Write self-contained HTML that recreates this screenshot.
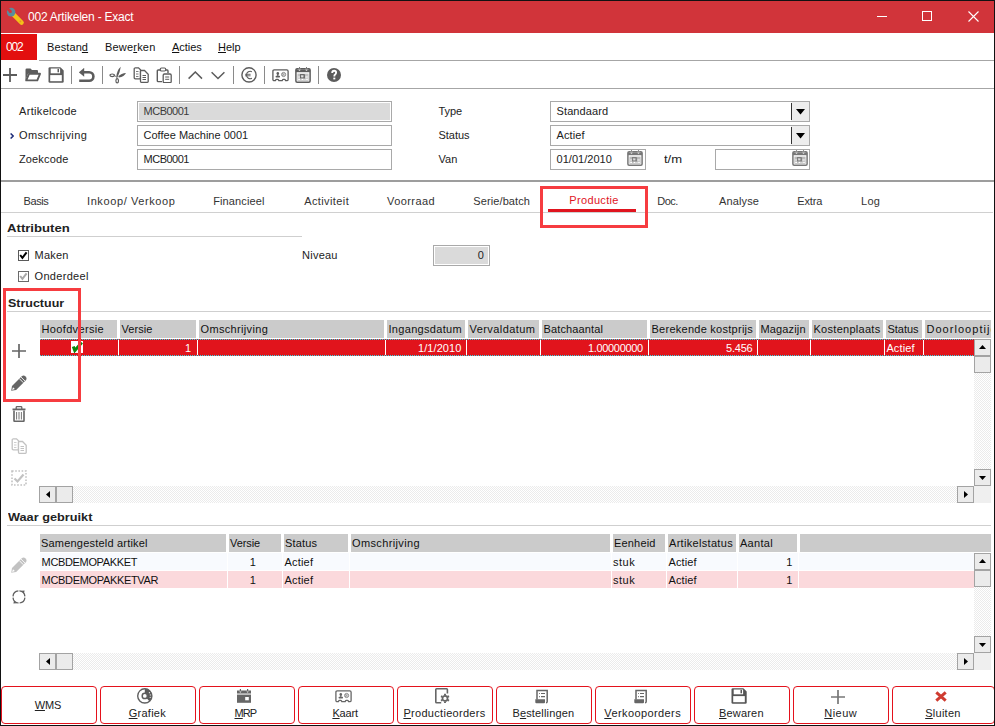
<!DOCTYPE html><html><head><meta charset="utf-8"><style>
html,body{margin:0;padding:0}
body{width:995px;height:726px;position:relative;overflow:hidden;background:#fff;font-family:"Liberation Sans",sans-serif;font-size:11px;color:#222}
.a{position:absolute}
.t{position:absolute;white-space:nowrap}
.u{text-decoration:underline}
.sb{position:absolute;box-sizing:border-box;border:1px solid #a3a3a3;background:#ebebeb}
.trk{position:absolute;background-color:#fff;background-image:repeating-conic-gradient(#ebebeb 0 25%,#fff 0 50%);background-size:2px 2px}
.btn{position:absolute;box-sizing:border-box;border:1px solid #e4121c;border-radius:4px;background:#fff}
</style></head><body>
<div class="a" style="left:1px;top:1px;width:993px;height:32px;background:#d1343a"></div>
<svg class="a" style="left:4px;top:6px" width="22" height="20" viewBox="0 0 22 20"><path d="M9.4 8.4 L17.6 16.6" stroke="#f4c118" stroke-width="4.4" stroke-linecap="round"/><circle cx="7.1" cy="6.1" r="4.3" fill="#5a8b9d"/><circle cx="6.4" cy="5.4" r="1.5" fill="#d1343a"/><path d="M7.4 4.6 L3.4 0.6 L1.6 2.4 L5.6 6.4 Z" fill="#d1343a"/><circle cx="16.4" cy="15.4" r="0.9" fill="#e8902a"/></svg>
<div class="t" style="top:9.5px;font-size:12px;line-height:15px;color:#fff;letter-spacing:-0.22px;left:28px;">002 Artikelen - Exact</div>
<div class="a" style="left:877px;top:16px;width:10px;height:1px;background:#fff"></div>
<div class="a" style="left:922px;top:11px;width:10px;height:10px;box-sizing:border-box;border:1px solid #fff"></div>
<svg class="a" style="left:968px;top:11px" width="11" height="11" viewBox="0 0 11 11"><path d="M0.5 0.5 L10.5 10.5 M10.5 0.5 L0.5 10.5" stroke="#fff" stroke-width="1.1"/></svg>
<div class="a" style="left:1px;top:34px;width:36px;height:26px;background:#e30f0f"></div>
<div class="t" style="top:39.5px;font-size:12px;line-height:15px;color:#fff;letter-spacing:-1.21px;left:6px;">002</div>
<div class="t" style="top:40.0px;font-size:11px;line-height:14px;color:#111;letter-spacing:0.10px;left:47px;">Bestan<span class="u">d</span></div>
<div class="t" style="top:40.0px;font-size:11px;line-height:14px;color:#111;letter-spacing:0.19px;left:105px;">Bewe<span class="u">r</span>ken</div>
<div class="t" style="top:40.0px;font-size:11px;line-height:14px;color:#111;letter-spacing:-0.05px;left:172px;"><span class="u">A</span>cties</div>
<div class="t" style="top:40.0px;font-size:11px;line-height:14px;color:#111;letter-spacing:0.02px;left:218px;"><span class="u">H</span>elp</div>
<div class="a" style="left:39px;top:60px;width:955px;height:1px;background:#a6a6a6"></div>
<svg class="a" style="left:3px;top:68px" width="14" height="14" viewBox="0 0 14 14"><path d="M7 0V14M0 7H14" stroke="#5c5c5c" stroke-width="1.8"/></svg>
<svg class="a" style="left:25px;top:68px" width="16" height="14" viewBox="0 0 16 14"><path d="M0.5 1.8 Q0.5 0.5 1.8 0.5 H5.5 L7 2 H12 Q13 2 13 3 V5 H4 Q3.3 5 3 5.8 L0.5 12.5 Z" fill="#5c5c5c"/><path d="M4 5.8 H15 L12.3 12.4 H1.2 Z" fill="#fff" stroke="#5c5c5c" stroke-width="1.9" stroke-linejoin="round"/></svg>
<svg class="a" style="left:48px;top:67px" width="16" height="16" viewBox="0 0 16 16"><path d="M0.5 1.6 Q0.5 0.3 1.8 0.3 H12.4 L15.7 3.6 V14.4 Q15.7 15.7 14.4 15.7 H1.8 Q0.5 15.7 0.5 14.4 Z" fill="#5c5c5c"/><rect x="2.7" y="1.5" width="9.4" height="4.8" fill="#fff"/><rect x="9.5" y="1.9" width="1.5" height="3.4" fill="#5c5c5c"/><rect x="2.2" y="8.1" width="11.6" height="6.1" fill="#fff"/></svg>
<div class="a" style="left:71px;top:66px;width:1px;height:18px;background:#8a8a8a"></div>
<svg class="a" style="left:79px;top:68px" width="16" height="14" viewBox="0 0 16 14"><path d="M3.5 4.3 H10.2 A4.2 4.2 0 0 1 10.2 12.7 H0.2" fill="none" stroke="#5c5c5c" stroke-width="2.6"/><path d="M-0.2 4.3 L5.2 -0.2 V8.8 Z" fill="#5c5c5c"/></svg>
<div class="a" style="left:102px;top:66px;width:1px;height:18px;background:#8a8a8a"></div>
<svg class="a" style="left:106px;top:64px" width="24" height="22" viewBox="0 0 24 22"><ellipse cx="6.2" cy="11.3" rx="2.2" ry="1.3" fill="none" stroke="#5c5c5c" stroke-width="1.2"/><ellipse cx="11.2" cy="16.7" rx="1.3" ry="2.1" fill="none" stroke="#5c5c5c" stroke-width="1.2"/><path d="M10.3 13.2 Q10.6 6.5 14.8 2.8 Q14.0 8.2 11.6 13.0 Z" fill="#5c5c5c"/><path d="M12.3 12.2 Q15.4 9.0 20.0 8.9 Q18.4 12.4 12.8 13.5 Z" fill="#5c5c5c"/><path d="M8.2 11.6 L10.4 12.6 M10.8 14.6 L11.0 13.0" stroke="#5c5c5c" stroke-width="0.9"/></svg>
<svg class="a" style="left:133px;top:67px" width="16" height="16" viewBox="0 0 16 16"><path d="M1.2 2 Q1.2 0.8 2.4 0.8 H5.5 L7.5 2.8 V11.8 H2.4 Q1.2 11.8 1.2 10.6 Z" fill="#fff" stroke="#5c5c5c" stroke-width="1.3"/><path d="M3 4.5 H5.5 M3 7 H5.5 M3 9.5 H5.5" stroke="#5c5c5c" stroke-width="0.8"/><path d="M7.5 4.2 Q7.5 3.5 8.2 3.5 H11.5 L15.2 7.2 V14.5 Q15.2 15.3 14.4 15.3 H8.3 Q7.5 15.3 7.5 14.5 Z" fill="#fff" stroke="#5c5c5c" stroke-width="1.3"/><path d="M9.5 8.5 H13 M9.5 10.5 H13 M9.5 12.5 H13" stroke="#5c5c5c" stroke-width="1"/></svg>
<svg class="a" style="left:156px;top:67px" width="16" height="16" viewBox="0 0 16 16"><path d="M4 3 H2.2 Q1.3 3 1.3 4 V13.8 Q1.3 14.6 2.2 14.6 H6 M10 3 H11.2 Q12 3 12 4 V6" fill="none" stroke="#5c5c5c" stroke-width="1.4"/><rect x="4.3" y="1" width="5.4" height="3" rx="1.2" fill="#fff" stroke="#5c5c5c" stroke-width="1.2"/><rect x="7.2" y="7" width="8" height="8.6" rx="1.2" fill="#fff" stroke="#5c5c5c" stroke-width="1.3"/><path d="M9.2 10 H13.2 M9.2 12.3 H13.2" stroke="#5c5c5c" stroke-width="1"/></svg>
<div class="a" style="left:179px;top:66px;width:1px;height:18px;background:#8a8a8a"></div>
<svg class="a" style="left:188px;top:71px" width="15" height="9" viewBox="0 0 15 9"><path d="M0.6 7.6 L7.3 1 L14 7.6" fill="none" stroke="#5c5c5c" stroke-width="1.5"/></svg>
<svg class="a" style="left:211px;top:71px" width="14" height="9" viewBox="0 0 14 9"><path d="M0.6 1.2 L7 7.5 L13.4 1.2" fill="none" stroke="#5c5c5c" stroke-width="1.5"/></svg>
<div class="a" style="left:233px;top:66px;width:1px;height:18px;background:#8a8a8a"></div>
<svg class="a" style="left:241px;top:67px" width="16" height="16" viewBox="0 0 16 16"><circle cx="8" cy="7.9" r="7.1" fill="none" stroke="#5c5c5c" stroke-width="1.4"/><path d="M10.9 4.7 A3.7 3.7 0 1 0 10.9 11.3" fill="none" stroke="#5c5c5c" stroke-width="1.15"/><path d="M4.0 7.3 H9.6 M4.0 8.8 H9.6" stroke="#5c5c5c" stroke-width="0.9"/></svg>
<div class="a" style="left:264px;top:66px;width:1px;height:18px;background:#8a8a8a"></div>
<svg class="a" style="left:271.5px;top:68.8px" width="17" height="13" viewBox="0 0 17 13"><path d="M2.2 0.9 H14.8 Q16.1 0.9 16.1 2.2 V10.4 Q16.1 11.7 14.8 11.7 H14.2 Q13.5 11.7 13.3 11.0 Q13.1 10.3 12.4 10.3 H11.4 Q10.7 10.3 10.5 11.0 Q10.3 11.7 9.6 11.7 H7.4 Q6.7 11.7 6.5 11.0 Q6.3 10.3 5.6 10.3 H4.6 Q3.9 10.3 3.7 11.0 Q3.5 11.7 2.8 11.7 H2.2 Q0.9 11.7 0.9 10.4 V2.2 Q0.9 0.9 2.2 0.9 Z" fill="none" stroke="#5c5c5c" stroke-width="1.3"/><circle cx="5.8" cy="4.4" r="1.3" fill="#5c5c5c"/><path d="M5.8 5 V7" stroke="#5c5c5c" stroke-width="1.2"/><rect x="3.6" y="6.8" width="4.4" height="1.6" rx="0.6" fill="#5c5c5c"/><circle cx="11.6" cy="5.5" r="2.1" fill="#d0d0d0" stroke="#888" stroke-width="0.9"/><path d="M10.6 4.2 Q12 5.5 10.6 6.8" fill="none" stroke="#777" stroke-width="0.7"/></svg>
<svg class="a" style="left:295px;top:67px" width="16" height="16" viewBox="0 0 16 16"><rect x="0.9" y="1.8" width="14.2" height="13.4" rx="1.2" fill="#fff" stroke="#5c5c5c" stroke-width="1.5"/><path d="M0.9 2.4 H15.1 V5.2 H0.9 Z" fill="#5c5c5c"/><path d="M4.5 0.2 V3.8 M11.5 0.2 V3.8" stroke="#e8e8e8" stroke-width="1.4"/><path d="M4.5 0 V2.6 M11.5 0 V2.6" stroke="#5c5c5c" stroke-width="0.8"/><rect x="2.4" y="6.6" width="11.2" height="7.2" fill="#c4c4c4"/><path d="M3.2 10 H5 M6.4 10 H8.6 M10.2 10 H12.8 M3.2 12.4 H5 M6.6 12.4 H8.4 M9.6 12.4 H10.4 M11.2 12.4 H12.8" stroke="#fff" stroke-width="1.1"/><rect x="5.4" y="7.6" width="3.6" height="3.3" fill="none" stroke="#5c5c5c" stroke-width="0.9"/><path d="M9.6 7.4 V11.4" stroke="#5c5c5c" stroke-width="0.8"/></svg>
<div class="a" style="left:318px;top:66px;width:1px;height:18px;background:#8a8a8a"></div>
<svg class="a" style="left:327px;top:68px" width="15" height="15" viewBox="0 0 15 15"><circle cx="7.0" cy="7.0" r="7.0" fill="#5c5c5c"/><path d="M5.2 5.1 Q5.2 2.8 7.2 2.8 Q9.1 2.8 9.1 4.6 Q9.1 5.8 8.1 6.5 Q7.3 7.0 7.3 8.6" fill="none" stroke="#fff" stroke-width="1.9"/><rect x="6.3" y="9.6" width="2.0" height="1.8" fill="#fff"/></svg>
<div class="a" style="left:1px;top:88px;width:993px;height:1px;background:#a6a6a6"></div>
<div class="t" style="top:104.0px;font-size:11px;line-height:14px;color:#222;letter-spacing:0.33px;left:19px;">Artikelcode</div>
<svg class="a" style="left:10px;top:133px" width="4" height="6" viewBox="0 0 4 6"><path d="M0.6 0.5 L3.2 3 L0.6 5.5" fill="none" stroke="#1c2a78" stroke-width="1.5"/></svg>
<div class="t" style="top:128.0px;font-size:11px;line-height:14px;color:#222;letter-spacing:0.38px;left:19px;">Omschrijving</div>
<div class="t" style="top:152.0px;font-size:11px;line-height:14px;color:#222;letter-spacing:0.14px;left:19px;">Zoekcode</div>
<div class="a" style="left:137px;top:101px;width:255px;height:21px;box-sizing:border-box;border:1px solid #a9a9a9;background:#fff"></div>
<div class="a" style="left:139px;top:103px;width:251px;height:17px;background:#dadada"></div>
<div class="a" style="left:137px;top:125px;width:255px;height:21px;box-sizing:border-box;border:1px solid #a9a9a9;background:#fff"></div>
<div class="a" style="left:137px;top:149px;width:255px;height:21px;box-sizing:border-box;border:1px solid #a9a9a9;background:#fff"></div>
<div class="t" style="top:104.0px;font-size:11px;line-height:14px;color:#3a3a3a;letter-spacing:-0.49px;left:143.5px;">MCB0001</div>
<div class="t" style="top:128.0px;font-size:11px;line-height:14px;color:#222;letter-spacing:0.02px;left:143.5px;">Coffee Machine 0001</div>
<div class="t" style="top:152.0px;font-size:11px;line-height:14px;color:#222;letter-spacing:-0.49px;left:143.5px;">MCB0001</div>
<div class="t" style="top:104.0px;font-size:11px;line-height:14px;color:#222;letter-spacing:-0.09px;left:438.5px;">Type</div>
<div class="t" style="top:128.0px;font-size:11px;line-height:14px;color:#222;letter-spacing:-0.02px;left:438.5px;">Status</div>
<div class="t" style="top:152.0px;font-size:11px;line-height:14px;color:#222;left:438.5px;">Van</div>
<div class="a" style="left:550px;top:101px;width:260px;height:21px;box-sizing:border-box;border:1px solid #a9a9a9;background:#fff"></div>
<div class="a" style="left:791px;top:102px;width:18px;height:19px;background:#ededed"></div>
<div class="a" style="left:791px;top:103px;width:1px;height:17px;background:#333"></div>
<svg class="a" style="left:796px;top:109px" width="9" height="6" viewBox="0 0 9 6"><path d="M0 0 H9 L4.5 5.5 Z" fill="#000"/></svg>
<div class="a" style="left:550px;top:125px;width:260px;height:21px;box-sizing:border-box;border:1px solid #a9a9a9;background:#fff"></div>
<div class="a" style="left:791px;top:126px;width:18px;height:19px;background:#ededed"></div>
<div class="a" style="left:791px;top:127px;width:1px;height:17px;background:#333"></div>
<svg class="a" style="left:796px;top:133px" width="9" height="6" viewBox="0 0 9 6"><path d="M0 0 H9 L4.5 5.5 Z" fill="#000"/></svg>
<div class="t" style="top:104.0px;font-size:11px;line-height:14px;color:#222;letter-spacing:0.12px;left:556.5px;">Standaard</div>
<div class="t" style="top:128.0px;font-size:11px;line-height:14px;color:#222;letter-spacing:0.09px;left:556.5px;">Actief</div>
<div class="a" style="left:550px;top:149px;width:96px;height:21px;box-sizing:border-box;border:1px solid #a9a9a9;background:#fff"></div>
<svg class="a" style="left:627px;top:150px" width="16" height="16" viewBox="0 0 16 16"><rect x="0.9" y="1.8" width="14.2" height="13.4" rx="1.2" fill="#fff" stroke="#777" stroke-width="1.5"/><path d="M0.9 2.4 H15.1 V5.2 H0.9 Z" fill="#777"/><path d="M4.5 0.2 V3.8 M11.5 0.2 V3.8" stroke="#e8e8e8" stroke-width="1.4"/><path d="M4.5 0 V2.6 M11.5 0 V2.6" stroke="#777" stroke-width="0.8"/><rect x="2.4" y="6.6" width="11.2" height="7.2" fill="#bbb"/><path d="M3.2 10 H5 M6.4 10 H8.6 M10.2 10 H12.8 M3.2 12.4 H5 M6.6 12.4 H8.4 M9.6 12.4 H10.4 M11.2 12.4 H12.8" stroke="#fff" stroke-width="1.1"/><rect x="5.4" y="7.6" width="3.6" height="3.3" fill="none" stroke="#777" stroke-width="0.9"/><path d="M9.6 7.4 V11.4" stroke="#777" stroke-width="0.8"/></svg>
<div class="t" style="top:152.0px;font-size:11px;line-height:14px;color:#222;letter-spacing:0.03px;left:556.5px;">01/01/2010</div>
<div class="t" style="top:152.0px;font-size:11px;line-height:14px;color:#222;left:663.5px;transform:scaleX(1.1845);transform-origin:0 0;">t/m</div>
<div class="a" style="left:715px;top:149px;width:95px;height:21px;box-sizing:border-box;border:1px solid #a9a9a9;background:#fff"></div>
<svg class="a" style="left:792px;top:150px" width="16" height="16" viewBox="0 0 16 16"><rect x="0.9" y="1.8" width="14.2" height="13.4" rx="1.2" fill="#fff" stroke="#777" stroke-width="1.5"/><path d="M0.9 2.4 H15.1 V5.2 H0.9 Z" fill="#777"/><path d="M4.5 0.2 V3.8 M11.5 0.2 V3.8" stroke="#e8e8e8" stroke-width="1.4"/><path d="M4.5 0 V2.6 M11.5 0 V2.6" stroke="#777" stroke-width="0.8"/><rect x="2.4" y="6.6" width="11.2" height="7.2" fill="#bbb"/><path d="M3.2 10 H5 M6.4 10 H8.6 M10.2 10 H12.8 M3.2 12.4 H5 M6.6 12.4 H8.4 M9.6 12.4 H10.4 M11.2 12.4 H12.8" stroke="#fff" stroke-width="1.1"/><rect x="5.4" y="7.6" width="3.6" height="3.3" fill="none" stroke="#777" stroke-width="0.9"/><path d="M9.6 7.4 V11.4" stroke="#777" stroke-width="0.8"/></svg>
<div class="a" style="left:1px;top:180px;width:993px;height:2px;background:#9d9d9d"></div>
<div class="t" style="top:194.0px;font-size:11px;line-height:14px;color:#333;letter-spacing:-0.40px;left:23.5px;">Basis</div>
<div class="t" style="top:194.0px;font-size:11px;line-height:14px;color:#333;letter-spacing:0.60px;left:87px;">Inkoop/ Verkoop</div>
<div class="t" style="top:194.0px;font-size:11px;line-height:14px;color:#333;letter-spacing:0.12px;left:213.2px;">Financieel</div>
<div class="t" style="top:194.0px;font-size:11px;line-height:14px;color:#333;letter-spacing:0.40px;left:304.2px;">Activiteit</div>
<div class="t" style="top:194.0px;font-size:11px;line-height:14px;color:#333;letter-spacing:0.43px;left:387px;">Voorraad</div>
<div class="t" style="top:194.0px;font-size:11px;line-height:14px;color:#333;letter-spacing:0.10px;left:473.3px;">Serie/batch</div>
<div class="t" style="top:194.0px;font-size:11px;line-height:14px;color:#333;letter-spacing:-0.54px;left:657.3px;">Doc.</div>
<div class="t" style="top:194.0px;font-size:11px;line-height:14px;color:#333;letter-spacing:0.12px;left:719.1px;">Analyse</div>
<div class="t" style="top:194.0px;font-size:11px;line-height:14px;color:#333;letter-spacing:-0.15px;left:797.3px;">Extra</div>
<div class="t" style="top:194.0px;font-size:11px;line-height:14px;color:#333;letter-spacing:0.31px;left:861px;">Log</div>
<div class="t" style="top:193.0px;font-size:11px;line-height:14px;color:#e0141e;letter-spacing:0.34px;left:569.3px;">Productie</div>
<div class="a" style="left:548px;top:209px;width:88px;height:4px;background:#e0141e"></div>
<div class="a" style="left:1px;top:212px;width:992px;height:1px;background:#d0d0d0"></div>
<div class="a" style="left:540px;top:186px;width:108px;height:42px;box-sizing:border-box;border:3px solid #f63c40"></div>
<div class="t" style="top:221.0px;font-size:11px;line-height:14px;color:#222;font-weight:bold;left:7.2px;transform:scaleX(1.1955);transform-origin:0 0;">Attributen</div>
<div class="a" style="left:7px;top:236px;width:295px;height:1px;background:#cfcfcf"></div>
<div class="a" style="left:18px;top:250px;width:11px;height:11px;box-sizing:border-box;border:1px solid #5a5a5a;background:#fff"></div>
<svg class="a" style="left:18px;top:250px" width="11" height="11" viewBox="0 0 11 11"><path d="M2.2 5.0 L4.4 7.8 L8.6 2.4" fill="none" stroke="#000" stroke-width="2.0"/></svg>
<div class="a" style="left:18px;top:271px;width:11px;height:11px;box-sizing:border-box;border:1px solid #6a6a6a;background:#fff"></div>
<svg class="a" style="left:18px;top:271px" width="11" height="11" viewBox="0 0 11 11"><path d="M2.2 5.0 L4.4 7.8 L8.6 2.4" fill="none" stroke="#a8a8a8" stroke-width="2.0"/></svg>
<div class="t" style="top:248.0px;font-size:11px;line-height:14px;color:#222;letter-spacing:0.17px;left:34.6px;">Maken</div>
<div class="t" style="top:269.0px;font-size:11px;line-height:14px;color:#222;letter-spacing:0.30px;left:34.6px;">Onderdeel</div>
<div class="t" style="top:248.0px;font-size:11px;line-height:14px;color:#222;letter-spacing:0.25px;left:302px;">Niveau</div>
<div class="a" style="left:433px;top:245px;width:57px;height:21px;box-sizing:border-box;border:1px solid #a9a9a9;background:#fff"></div>
<div class="a" style="left:435px;top:247px;width:53px;height:17px;background:#dadada"></div>
<div class="t" style="top:248.0px;font-size:11px;line-height:14px;color:#222;right:511.20px;">0</div>
<div class="t" style="top:296.0px;font-size:11px;line-height:14px;color:#222;font-weight:bold;left:7.5px;transform:scaleX(1.1333);transform-origin:0 0;">Structuur</div>
<div class="a" style="left:7px;top:311px;width:984px;height:1px;background:#cfcfcf"></div>
<div class="a" style="left:0;top:0;width:991px;height:726px;overflow:hidden">
<div class="a" style="left:40px;top:320px;width:77px;height:18px;background:#cbcbcb"></div>
<div class="t" style="top:321.5px;font-size:11px;line-height:14px;color:#111;letter-spacing:0.35px;left:41.5px;">Hoofdversie</div>
<div class="a" style="left:120px;top:320px;width:76px;height:18px;background:#cbcbcb"></div>
<div class="t" style="top:321.5px;font-size:11px;line-height:14px;color:#111;letter-spacing:0.06px;left:121.5px;">Versie</div>
<div class="a" style="left:199px;top:320px;width:185px;height:18px;background:#cbcbcb"></div>
<div class="t" style="top:321.5px;font-size:11px;line-height:14px;color:#111;letter-spacing:0.34px;left:200.5px;">Omschrijving</div>
<div class="a" style="left:387px;top:320px;width:78px;height:18px;background:#cbcbcb"></div>
<div class="t" style="top:321.5px;font-size:11px;line-height:14px;color:#111;letter-spacing:0.31px;left:388.5px;">Ingangsdatum</div>
<div class="a" style="left:468px;top:320px;width:71px;height:18px;background:#cbcbcb"></div>
<div class="t" style="top:321.5px;font-size:11px;line-height:14px;color:#111;letter-spacing:0.43px;left:469.5px;">Vervaldatum</div>
<div class="a" style="left:542px;top:320px;width:105px;height:18px;background:#cbcbcb"></div>
<div class="t" style="top:321.5px;font-size:11px;line-height:14px;color:#111;letter-spacing:0.14px;left:543.5px;">Batchaantal</div>
<div class="a" style="left:650px;top:320px;width:106px;height:18px;background:#cbcbcb"></div>
<div class="t" style="top:321.5px;font-size:11px;line-height:14px;color:#111;letter-spacing:0.26px;left:651.5px;">Berekende kostprijs</div>
<div class="a" style="left:759px;top:320px;width:50px;height:18px;background:#cbcbcb"></div>
<div class="t" style="top:321.5px;font-size:11px;line-height:14px;color:#111;letter-spacing:0.14px;left:760.5px;">Magazijn</div>
<div class="a" style="left:812px;top:320px;width:71px;height:18px;background:#cbcbcb"></div>
<div class="t" style="top:321.5px;font-size:11px;line-height:14px;color:#111;letter-spacing:0.28px;left:813.5px;">Kostenplaats</div>
<div class="a" style="left:886px;top:320px;width:36px;height:18px;background:#cbcbcb"></div>
<div class="t" style="top:321.5px;font-size:11px;line-height:14px;color:#111;letter-spacing:-0.04px;left:887.5px;">Status</div>
<div class="a" style="left:925px;top:320px;width:66px;height:18px;background:#cbcbcb"></div>
<div class="t" style="top:321.5px;font-size:11px;line-height:14px;color:#111;letter-spacing:1.03px;left:926.5px;">Doorlooptijd</div>
</div>
<div class="a" style="left:40px;top:339px;width:934px;height:17px;background:#e1141c"></div>
<div class="a" style="left:40px;top:339px;width:934px;height:1px;background-image:repeating-linear-gradient(90deg,#30d8e8 0 1px,#e1141c 1px 2px)"></div>
<div class="a" style="left:40px;top:355px;width:934px;height:1px;background-image:repeating-linear-gradient(90deg,#30d8e8 0 1px,#e1141c 1px 2px)"></div>
<div class="a" style="left:118px;top:340px;width:1px;height:15px;background:#fff"></div>
<div class="a" style="left:197px;top:340px;width:1px;height:15px;background:#fff"></div>
<div class="a" style="left:385px;top:340px;width:1px;height:15px;background:#fff"></div>
<div class="a" style="left:466px;top:340px;width:1px;height:15px;background:#fff"></div>
<div class="a" style="left:540px;top:340px;width:1px;height:15px;background:#fff"></div>
<div class="a" style="left:648px;top:340px;width:1px;height:15px;background:#fff"></div>
<div class="a" style="left:757px;top:340px;width:1px;height:15px;background:#fff"></div>
<div class="a" style="left:810px;top:340px;width:1px;height:15px;background:#fff"></div>
<div class="a" style="left:884px;top:340px;width:1px;height:15px;background:#fff"></div>
<div class="a" style="left:923px;top:340px;width:1px;height:15px;background:#fff"></div>
<div class="a" style="left:71px;top:341px;width:12px;height:12px;background:#fff"></div>
<svg class="a" style="left:71px;top:341px" width="12" height="12" viewBox="0 0 12 12"><path d="M2.3 5.4 L3.8 9.6 L10.8 1.6" fill="none" stroke="#0b870b" stroke-width="3.0" stroke-linejoin="miter"/></svg>
<div class="t" style="top:341.0px;font-size:11px;line-height:14px;color:#fff;right:803.80px;">1</div>
<div class="t" style="top:341.0px;font-size:11px;line-height:14px;color:#fff;letter-spacing:0.06px;right:533.64px;">1/1/2010</div>
<div class="t" style="top:341.0px;font-size:11px;line-height:14px;color:#fff;letter-spacing:-0.34px;right:352.24px;">1.00000000</div>
<div class="t" style="top:341.0px;font-size:11px;line-height:14px;color:#fff;letter-spacing:-0.22px;right:242.52px;">5.456</div>
<div class="t" style="top:341.0px;font-size:11px;line-height:14px;color:#fff;letter-spacing:0.13px;left:886.4px;">Actief</div>
<div class="trk" style="left:974px;top:339px;width:17px;height:147px"></div>
<div class="sb" style="left:974px;top:339px;width:17px;height:17px"></div>
<svg class="a" style="left:979px;top:345px" width="7" height="4" viewBox="0 0 7 4"><path d="M0 4 L3.5 0 L7 4 Z" fill="#000"/></svg>
<div class="sb" style="left:974px;top:356px;width:17px;height:17px"></div>
<div class="sb" style="left:974px;top:469px;width:17px;height:17px"></div>
<svg class="a" style="left:979px;top:476px" width="7" height="4" viewBox="0 0 7 4"><path d="M0 0 L7 0 L3.5 4 Z" fill="#000"/></svg>
<div class="trk" style="left:39px;top:486px;width:935px;height:17px"></div>
<div class="sb" style="left:39px;top:486px;width:17px;height:17px"></div>
<svg class="a" style="left:46px;top:491px" width="4" height="7" viewBox="0 0 4 7"><path d="M4 0 V7 L0 3.5 Z" fill="#000"/></svg>
<div class="sb" style="left:56px;top:486px;width:17px;height:17px"></div>
<div class="sb" style="left:957px;top:486px;width:17px;height:17px"></div>
<svg class="a" style="left:964px;top:491px" width="4" height="7" viewBox="0 0 4 7"><path d="M0 0 V7 L4 3.5 Z" fill="#000"/></svg>
<div class="a" style="left:974px;top:486px;width:17px;height:17px;background:#efefef"></div>
<svg class="a" style="left:12px;top:344px" width="14" height="14" viewBox="0 0 14 14"><path d="M7 0V14M0 7H14" stroke="#666" stroke-width="1.7"/></svg>
<svg class="a" style="left:11px;top:375px" width="16" height="16" viewBox="0 0 16 16"><path d="M0.2 15.8 L1.0 10.9 L11.0 0.9 Q12.9 -0.2 14.6 1.5 Q16.2 3.2 15.1 5.0 L5.1 15.0 Z" fill="#666"/><path d="M9.9 2.0 L14.0 6.1 M8.3 3.6 L12.4 7.7" stroke="#fff" stroke-width="0.9"/><path d="M2.0 12.2 L3.8 14.0 L1.1 14.9 Z" fill="#fff"/></svg>
<svg class="a" style="left:12px;top:406px" width="14" height="16" viewBox="0 0 14 16"><path d="M0.5 3.4 H13.5" stroke="#666" stroke-width="1.8"/><path d="M4.2 3 V1.5 Q4.2 0.6 5.1 0.6 H8.9 Q9.8 0.6 9.8 1.5 V3" fill="none" stroke="#666" stroke-width="1.3"/><path d="M2 4.5 V14.5 Q2 15.4 2.9 15.4 H11.1 Q12 15.4 12 14.5 V4.5" fill="none" stroke="#666" stroke-width="1.6"/><path d="M4.6 6 V13.5 M7 6 V13.5 M9.4 6 V13.5" stroke="#666" stroke-width="0.9"/></svg>
<svg class="a" style="left:11px;top:438px" width="16" height="16" viewBox="0 0 16 16"><path d="M1.2 2 Q1.2 0.8 2.4 0.8 H5.5 L7.5 2.8 V11.8 H2.4 Q1.2 11.8 1.2 10.6 Z" fill="#fff" stroke="#c2c2c2" stroke-width="1.3"/><path d="M3 4.5 H5.5 M3 7 H5.5 M3 9.5 H5.5" stroke="#c2c2c2" stroke-width="0.8"/><path d="M7.5 4.2 Q7.5 3.5 8.2 3.5 H11.5 L15.2 7.2 V14.5 Q15.2 15.3 14.4 15.3 H8.3 Q7.5 15.3 7.5 14.5 Z" fill="#fff" stroke="#c2c2c2" stroke-width="1.3"/><path d="M9.5 8.5 H13 M9.5 10.5 H13 M9.5 12.5 H13" stroke="#c2c2c2" stroke-width="1"/></svg>
<svg class="a" style="left:11px;top:470px" width="16" height="16" viewBox="0 0 16 16"><rect x="1" y="1" width="14" height="14" fill="none" stroke="#c2c2c2" stroke-width="1.6" stroke-dasharray="1.6 1.6"/><path d="M3.5 8.5 L6.5 11.5 L12.5 4.5" fill="none" stroke="#c2c2c2" stroke-width="2.2"/></svg>
<div class="a" style="left:3px;top:288px;width:78px;height:114px;box-sizing:border-box;border:3px solid #f63c40"></div>
<div class="t" style="top:510.0px;font-size:11px;line-height:14px;color:#222;font-weight:bold;left:7.6px;transform:scaleX(1.1567);transform-origin:0 0;">Waar gebruikt</div>
<div class="a" style="left:7px;top:525px;width:984px;height:1px;background:#cfcfcf"></div>
<div class="a" style="left:40px;top:534px;width:186px;height:18px;background:#cbcbcb"></div>
<div class="t" style="top:536.0px;font-size:11px;line-height:14px;color:#111;letter-spacing:0.20px;left:41px;">Samengesteld artikel</div>
<div class="a" style="left:229px;top:534px;width:52px;height:18px;background:#cbcbcb"></div>
<div class="t" style="top:536.0px;font-size:11px;line-height:14px;color:#111;letter-spacing:-0.08px;left:230px;">Versie</div>
<div class="a" style="left:284px;top:534px;width:64px;height:18px;background:#cbcbcb"></div>
<div class="t" style="top:536.0px;font-size:11px;line-height:14px;color:#111;letter-spacing:0.18px;left:285px;">Status</div>
<div class="a" style="left:351px;top:534px;width:259px;height:18px;background:#cbcbcb"></div>
<div class="t" style="top:536.0px;font-size:11px;line-height:14px;color:#111;letter-spacing:0.37px;left:352px;">Omschrijving</div>
<div class="a" style="left:613px;top:534px;width:52px;height:18px;background:#cbcbcb"></div>
<div class="t" style="top:536.0px;font-size:11px;line-height:14px;color:#111;letter-spacing:0.18px;left:614px;">Eenheid</div>
<div class="a" style="left:668px;top:534px;width:68px;height:18px;background:#cbcbcb"></div>
<div class="t" style="top:536.0px;font-size:11px;line-height:14px;color:#111;letter-spacing:0.31px;left:669px;">Artikelstatus</div>
<div class="a" style="left:739px;top:534px;width:58px;height:18px;background:#cbcbcb"></div>
<div class="t" style="top:536.0px;font-size:11px;line-height:14px;color:#111;letter-spacing:0.28px;left:740px;">Aantal</div>
<div class="a" style="left:800px;top:534px;width:191px;height:18px;background:#cbcbcb"></div>
<div class="a" style="left:40px;top:553px;width:934px;height:17px;background:#f8fafe"></div>
<div class="a" style="left:40px;top:571px;width:934px;height:17px;background:#fbd9dc"></div>
<div class="a" style="left:227px;top:553px;width:1px;height:35px;background:#fff"></div>
<div class="a" style="left:282px;top:553px;width:1px;height:35px;background:#fff"></div>
<div class="a" style="left:349px;top:553px;width:1px;height:35px;background:#fff"></div>
<div class="a" style="left:611px;top:553px;width:1px;height:35px;background:#fff"></div>
<div class="a" style="left:666px;top:553px;width:1px;height:35px;background:#fff"></div>
<div class="a" style="left:737px;top:553px;width:1px;height:35px;background:#fff"></div>
<div class="a" style="left:798px;top:553px;width:1px;height:35px;background:#fff"></div>
<div class="t" style="top:555.0px;font-size:11px;line-height:14px;color:#111;letter-spacing:-0.35px;left:41.6px;">MCBDEMOPAKKET</div>
<div class="t" style="top:555.0px;font-size:11px;line-height:14px;color:#111;right:739.20px;">1</div>
<div class="t" style="top:555.0px;font-size:11px;line-height:14px;color:#111;letter-spacing:0.19px;left:284.5px;">Actief</div>
<div class="t" style="top:555.0px;font-size:11px;line-height:14px;color:#111;letter-spacing:0.50px;left:613px;">stuk</div>
<div class="t" style="top:555.0px;font-size:11px;line-height:14px;color:#111;letter-spacing:0.13px;left:668.5px;">Actief</div>
<div class="t" style="top:555.0px;font-size:11px;line-height:14px;color:#111;right:202.70px;">1</div>
<div class="t" style="top:573.0px;font-size:11px;line-height:14px;color:#111;letter-spacing:-0.33px;left:41.6px;">MCBDEMOPAKKETVAR</div>
<div class="t" style="top:573.0px;font-size:11px;line-height:14px;color:#111;right:739.20px;">1</div>
<div class="t" style="top:573.0px;font-size:11px;line-height:14px;color:#111;letter-spacing:0.19px;left:284.5px;">Actief</div>
<div class="t" style="top:573.0px;font-size:11px;line-height:14px;color:#111;letter-spacing:0.50px;left:613px;">stuk</div>
<div class="t" style="top:573.0px;font-size:11px;line-height:14px;color:#111;letter-spacing:0.13px;left:668.5px;">Actief</div>
<div class="t" style="top:573.0px;font-size:11px;line-height:14px;color:#111;right:202.70px;">1</div>
<div class="trk" style="left:974px;top:553px;width:17px;height:100px"></div>
<div class="sb" style="left:974px;top:553px;width:17px;height:17px"></div>
<svg class="a" style="left:979px;top:559px" width="7" height="4" viewBox="0 0 7 4"><path d="M0 4 L3.5 0 L7 4 Z" fill="#000"/></svg>
<div class="sb" style="left:974px;top:570px;width:17px;height:17px"></div>
<div class="sb" style="left:974px;top:636px;width:17px;height:17px"></div>
<svg class="a" style="left:979px;top:643px" width="7" height="4" viewBox="0 0 7 4"><path d="M0 0 L7 0 L3.5 4 Z" fill="#000"/></svg>
<div class="trk" style="left:39px;top:653px;width:935px;height:17px"></div>
<div class="sb" style="left:39px;top:653px;width:17px;height:17px"></div>
<svg class="a" style="left:46px;top:658px" width="4" height="7" viewBox="0 0 4 7"><path d="M4 0 V7 L0 3.5 Z" fill="#000"/></svg>
<div class="sb" style="left:56px;top:653px;width:17px;height:17px"></div>
<div class="sb" style="left:957px;top:653px;width:17px;height:17px"></div>
<svg class="a" style="left:964px;top:658px" width="4" height="7" viewBox="0 0 4 7"><path d="M0 0 V7 L4 3.5 Z" fill="#000"/></svg>
<div class="a" style="left:974px;top:653px;width:17px;height:17px;background:#efefef"></div>
<svg class="a" style="left:11px;top:557px" width="16" height="16" viewBox="0 0 16 16"><path d="M0.2 15.8 L1.0 10.9 L11.0 0.9 Q12.9 -0.2 14.6 1.5 Q16.2 3.2 15.1 5.0 L5.1 15.0 Z" fill="#c2c2c2"/><path d="M9.9 2.0 L14.0 6.1 M8.3 3.6 L12.4 7.7" stroke="#fff" stroke-width="0.9"/><path d="M2.0 12.2 L3.8 14.0 L1.1 14.9 Z" fill="#fff"/></svg>
<svg class="a" style="left:11px;top:589px" width="16" height="16" viewBox="0 0 16 16"><path d="M8.4 1.9 A6 6 0 0 1 13.9 7.4 M13.9 8.6 A6 6 0 0 1 8.6 14.0 M7.6 14.0 A6 6 0 0 1 2.0 8.6 M2.0 7.4 A6 6 0 0 1 7.4 1.9" fill="none" stroke="#5f5f5f" stroke-width="1.25"/><path d="M10.6 1.8 L13.6 1.4 L12.9 4.4 Z M5.4 14.2 L2.4 14.6 L3.1 11.6 Z" fill="#5f5f5f"/></svg>
<div class="btn" style="left:1px;top:686px;width:96px;height:38px"></div>
<div class="t" style="top:698.0px;font-size:11px;line-height:14px;color:#222;letter-spacing:-0.24px;left:34.8px;"><span class="u">W</span>MS</div>
<div class="btn" style="left:100px;top:686px;width:96px;height:38px"></div>
<div class="t" style="top:706.0px;font-size:11px;line-height:14px;color:#222;letter-spacing:0.26px;left:128.7px;"><span class="u">G</span>rafiek</div>
<div class="btn" style="left:199px;top:686px;width:96px;height:38px"></div>
<div class="t" style="top:706.0px;font-size:11px;line-height:14px;color:#222;letter-spacing:-0.97px;left:234.5px;"><span class="u">M</span>RP</div>
<div class="btn" style="left:298px;top:686px;width:96px;height:38px"></div>
<div class="t" style="top:706.0px;font-size:11px;line-height:14px;color:#222;letter-spacing:-0.13px;left:332.4px;"><span class="u">K</span>aart</div>
<div class="btn" style="left:397px;top:686px;width:96px;height:38px"></div>
<div class="t" style="top:706.0px;font-size:11px;line-height:14px;color:#222;letter-spacing:0.30px;left:403.4px;"><span class="u">P</span>roductieorders</div>
<div class="btn" style="left:496px;top:686px;width:96px;height:38px"></div>
<div class="t" style="top:706.0px;font-size:11px;line-height:14px;color:#222;letter-spacing:0.16px;left:512.4px;">B<span class="u">e</span>stellingen</div>
<div class="btn" style="left:595px;top:686px;width:96px;height:38px"></div>
<div class="t" style="top:706.0px;font-size:11px;line-height:14px;color:#222;letter-spacing:0.40px;left:604.3px;"><span class="u">V</span>erkooporders</div>
<div class="btn" style="left:694px;top:686px;width:96px;height:38px"></div>
<div class="t" style="top:706.0px;font-size:11px;line-height:14px;color:#222;letter-spacing:0.18px;left:719px;"><span class="u">B</span>ewaren</div>
<div class="btn" style="left:793px;top:686px;width:96px;height:38px"></div>
<div class="t" style="top:706.0px;font-size:11px;line-height:14px;color:#222;letter-spacing:0.46px;left:824.3px;"><span class="u">N</span>ieuw</div>
<div class="btn" style="left:892px;top:686px;width:103px;height:38px"></div>
<div class="t" style="top:706.0px;font-size:11px;line-height:14px;color:#222;letter-spacing:0.26px;left:925.2px;"><span class="u">S</span>luiten</div>
<svg class="a" style="left:136px;top:688px" width="18" height="16" viewBox="0 0 18 16"><path d="M8.80 0.80 A7.1 7.1 0 0 1 13.36 13.34 L10.47 9.89 A2.6 2.6 0 0 0 8.80 5.30 Z" fill="#5a5a5a"/><circle cx="13.39" cy="4.69" r="0.6" fill="#fff"/><circle cx="14.31" cy="6.93" r="0.6" fill="#fff"/><circle cx="14.21" cy="9.35" r="0.6" fill="#fff"/><circle cx="8.8" cy="7.9" r="7.1" fill="none" stroke="#5f5f5f" stroke-width="1.4"/><circle cx="8.8" cy="7.9" r="2.6" fill="none" stroke="#5f5f5f" stroke-width="1.5"/></svg>
<svg class="a" style="left:237px;top:689px" width="14" height="14" viewBox="0 0 14 14"><path d="M0 1.5 H14 V4.6 H0 Z" fill="#666"/><path d="M0 4.6 H14 V6 H0 Z" fill="#bdbdbd"/><path d="M0 6 H14 V13.8 H0 Z" fill="#666"/><path d="M2.6 1.2 L3.4 3.8 L4.2 1.2 M9.8 1.2 L10.6 3.8 L11.4 1.2" fill="none" stroke="#bbb" stroke-width="0.9"/><path d="M3.4 0 V2 M10.6 0 V2" stroke="#666" stroke-width="1.2"/><rect x="8.2" y="8" width="3.6" height="3.3" fill="#fff"/></svg>
<svg class="a" style="left:335px;top:689.5px" width="17" height="13" viewBox="0 0 17 13"><path d="M2.2 0.9 H14.8 Q16.1 0.9 16.1 2.2 V10.4 Q16.1 11.7 14.8 11.7 H14.2 Q13.5 11.7 13.3 11.0 Q13.1 10.3 12.4 10.3 H11.4 Q10.7 10.3 10.5 11.0 Q10.3 11.7 9.6 11.7 H7.4 Q6.7 11.7 6.5 11.0 Q6.3 10.3 5.6 10.3 H4.6 Q3.9 10.3 3.7 11.0 Q3.5 11.7 2.8 11.7 H2.2 Q0.9 11.7 0.9 10.4 V2.2 Q0.9 0.9 2.2 0.9 Z" fill="none" stroke="#666" stroke-width="1.3"/><circle cx="5.8" cy="4.4" r="1.3" fill="#666"/><path d="M5.8 5 V7" stroke="#666" stroke-width="1.2"/><rect x="3.6" y="6.8" width="4.4" height="1.6" rx="0.6" fill="#666"/><circle cx="11.6" cy="5.5" r="2.1" fill="#d0d0d0" stroke="#888" stroke-width="0.9"/><path d="M10.6 4.2 Q12 5.5 10.6 6.8" fill="none" stroke="#777" stroke-width="0.7"/></svg>
<svg class="a" style="left:435px;top:688px" width="16" height="16" viewBox="0 0 16 16"><path d="M6.2 14.8 H1.6 Q0.8 14.8 0.8 14 V1.6 Q0.8 0.8 1.6 0.8 H11.6 Q12.4 0.8 12.4 1.6 V5.6" fill="none" stroke="#666" stroke-width="1.6"/><circle cx="10" cy="10.4" r="2.5" fill="none" stroke="#666" stroke-width="1.7"/><path d="M10.00 7.40 L10.00 5.80 M7.40 8.90 L6.02 8.10 M7.40 11.90 L6.02 12.70 M10.00 13.40 L10.00 15.00 M12.60 11.90 L13.98 12.70 M12.60 8.90 L13.98 8.10" stroke="#666" stroke-width="1.9"/></svg>
<svg class="a" style="left:535px;top:688.5px" width="14" height="15" viewBox="0 0 14 15"><path d="M2 10.5 V1.5 H12.2 V12.5 Q12.2 13.8 11 13.8" fill="none" stroke="#666" stroke-width="1.5"/><path d="M0.3 10.2 H10 V13.2 Q10 14.2 9 14.2 H1.3 Q0.3 14.2 0.3 13.2 Z" fill="#666"/><path d="M4.2 4.5 H5 M6 4.5 H10 M4.2 7.6 H5 M6 7.6 H10" stroke="#666" stroke-width="1.2"/></svg>
<svg class="a" style="left:634px;top:688.5px" width="14" height="15" viewBox="0 0 14 15"><path d="M2 10.5 V1.5 H12.2 V12.5 Q12.2 13.8 11 13.8" fill="none" stroke="#666" stroke-width="1.5"/><path d="M0.3 10.2 H10 V13.2 Q10 14.2 9 14.2 H1.3 Q0.3 14.2 0.3 13.2 Z" fill="#666"/><path d="M4.2 4.5 H5 M6 4.5 H10 M4.2 7.6 H5 M6 7.6 H10" stroke="#666" stroke-width="1.2"/></svg>
<svg class="a" style="left:731px;top:688px" width="16" height="16" viewBox="0 0 16 16"><path d="M0.5 1.6 Q0.5 0.3 1.8 0.3 H12.4 L15.7 3.6 V14.4 Q15.7 15.7 14.4 15.7 H1.8 Q0.5 15.7 0.5 14.4 Z" fill="#555"/><rect x="2.7" y="1.5" width="9.4" height="4.8" fill="#fff"/><rect x="9.5" y="1.9" width="1.5" height="3.4" fill="#555"/><rect x="2.2" y="8.1" width="11.6" height="6.1" fill="#fff"/></svg>
<svg class="a" style="left:831px;top:690px" width="14" height="14" viewBox="0 0 14 14"><path d="M7 0V14M0 7H14" stroke="#777" stroke-width="1.7"/></svg>
<svg class="a" style="left:935px;top:691px" width="12" height="11" viewBox="0 0 12 11"><path d="M1.3 1.3 L10.7 9.7 M10.7 1.3 L1.3 9.7" stroke="#cf3b30" stroke-width="3"/></svg>
<div class="a" style="left:0px;top:0px;width:995px;height:1px;background:#111"></div>
<div class="a" style="left:0px;top:0px;width:1px;height:726px;background:#111"></div>
<div class="a" style="left:994px;top:0px;width:1px;height:726px;background:#111"></div>
<div class="a" style="left:0px;top:725px;width:995px;height:1px;background:#111"></div>
</body></html>
